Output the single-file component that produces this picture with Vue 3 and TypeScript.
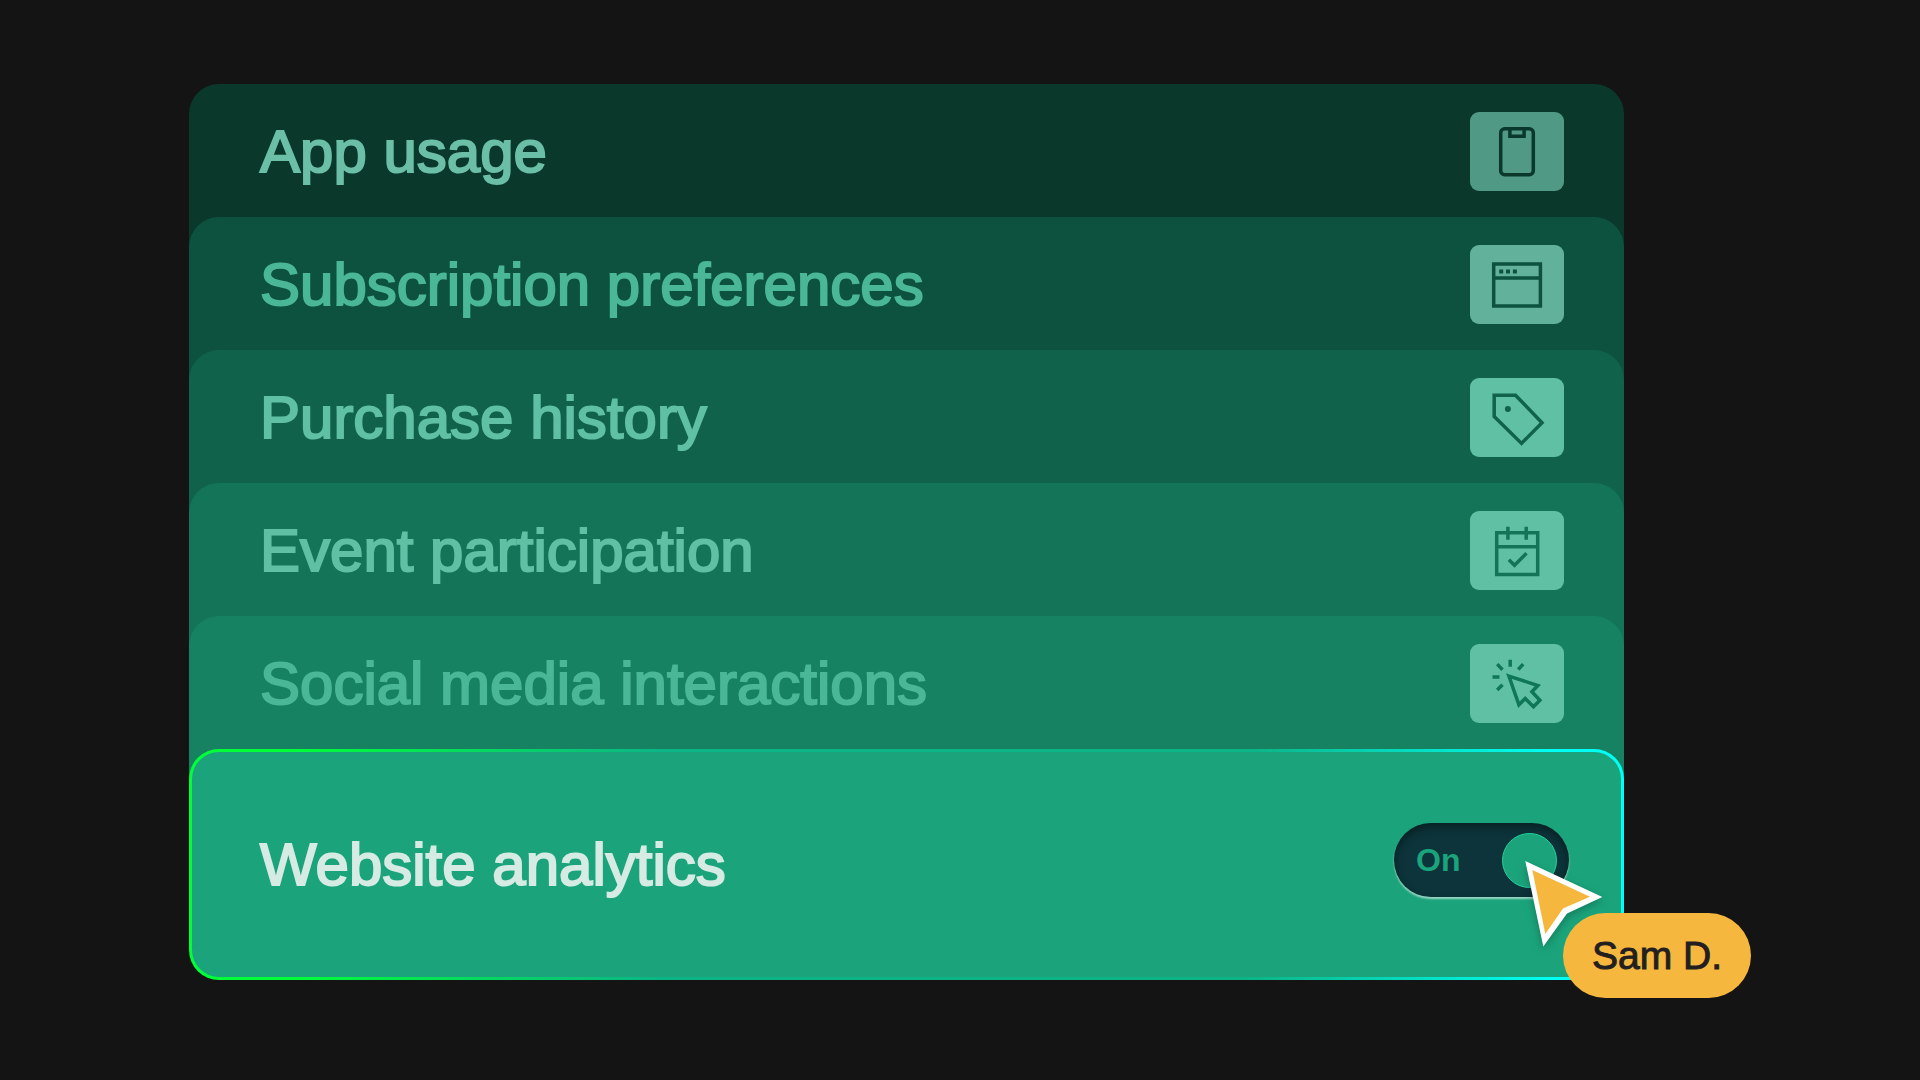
<script setup lang="ts">
import { ref } from 'vue'

type IconName = 'phone' | 'window' | 'tag' | 'calendar' | 'click'

interface Source {
  label: string
  icon: IconName
}

const sources: Source[] = [
  { label: 'App usage', icon: 'phone' },
  { label: 'Subscription preferences', icon: 'window' },
  { label: 'Purchase history', icon: 'tag' },
  { label: 'Event participation', icon: 'calendar' },
  { label: 'Social media interactions', icon: 'click' },
]

const enabled = ref(true)
</script>

<template>
  <main class="page">
    <section class="stack">
      <div v-for="source in sources" :key="source.icon" class="row" :class="source.icon">
        <h2 class="label">{{ source.label }}</h2>
        <span class="tile">
          <svg class="icon" viewBox="0 0 60 60" stroke-width="3.5" aria-hidden="true">
            <template v-if="source.icon === 'phone'">
              <rect x="13.7" y="6.7" width="32.6" height="46" rx="4" />
              <path d="M22.9 6.7v7.6h14.2v-7.6" />
            </template>
            <template v-else-if="source.icon === 'window'">
              <path d="M6.7 9.1h46.7v42H6.7zM6.7 23h46.7" />
              <path class="solid" d="M12.2 14.4h4v4h-4zM19 14.4h4v4h-4zM25.9 14.4h4v4h-4z" />
            </template>
            <template v-else-if="source.icon === 'tag'">
              <path d="M7.2 7.2h21.3L55 34.7 34.5 55.4 7.2 28.4z" />
              <circle class="solid" cx="20.9" cy="21" r="3" />
            </template>
            <template v-else-if="source.icon === 'calendar'">
              <path d="M9.7 11.7h41v41.8h-41zM9.7 25.8h41M20.9 5.7v13M39.2 5.7v13" />
              <path d="M21.9 38.7l5.6 5.6 12-12" />
            </template>
            <template v-else>
              <path d="M21.9 22.1l29 9.4-6 6.3 8 8.5-6.4 6.5-8.3-8.3-6.3 6.3z" />
              <path d="M23.2 5.8v7M5.5 23.1h7M36.2 10.1l-5 5.4M10.2 10.1l5.3 5.7M15.5 30.8l-5.3 5.3" />
            </template>
          </svg>
        </span>
      </div>

      <div class="row active">
        <h2 id="analytics-label" class="label">Website analytics</h2>
        <label class="switch">
          <input v-model="enabled" type="checkbox" role="switch" aria-labelledby="analytics-label" />
          <span class="state">On</span>
          <span class="knob"></span>
        </label>
        <div class="collaborator">
          <svg class="pointer" viewBox="0 0 78 86" aria-hidden="true">
            <path fill="#fff" d="M0.3 0L77.3 36 42 52.5 18.3 85.5z" />
            <path fill="#f6b73f" d="M7.3 9L65 35.8 38 47.5 20.3 73z" />
          </svg>
          <span class="name">Sam D.</span>
        </div>
      </div>
    </section>
  </main>
</template>

<style>
body {
  margin: 0;
  background: #141414;
}
</style>

<style scoped>
.page {
  box-sizing: border-box;
  min-height: 100vh;
  padding: 84px 296px 100px 189px;
  background: #141414;
  font-family: 'Liberation Sans', Arial, sans-serif;
}

.stack {
  display: flex;
  flex-direction: column;
}

.row {
  display: flex;
  align-items: flex-start;
  justify-content: space-between;
  margin-bottom: -32px;
  padding: 28px 60px 58px 71px;
  border-radius: 30px 30px 0 0;
}

.label {
  margin: 0;
  font-size: 60px;
  font-weight: 400;
  line-height: 79px;
  -webkit-text-stroke: 2px currentColor;
}

.tile {
  display: flex;
  align-items: center;
  justify-content: center;
  width: 94px;
  height: 79px;
  border-radius: 9px;
}

.icon {
  width: 60px;
  height: 60px;
  fill: none;
  stroke: currentColor;
}

.icon .solid {
  fill: currentColor;
  stroke: none;
}

.phone {
  background: #0a382b;
  color: #6bbfa6;
}
.phone .tile {
  background: #509a85;
  color: #0a382b;
}

.window {
  background: #0d523f;
  color: #4ab796;
}
.window .tile {
  background: #62b19a;
  color: #0d523f;
}

.tag {
  background: #10624b;
  color: #5fc0a4;
}
.tag .tile {
  background: #5fc0a4;
  color: #10624b;
}

.calendar {
  background: #137458;
  color: #5fc0a4;
}
.calendar .tile {
  background: #5fc0a4;
  color: #137458;
}

.click {
  background: #168262;
  color: #4ab796;
}
.click .tile {
  background: #5fc0a4;
  color: #0f7757;
}

.active {
  position: relative;
  margin-bottom: 0;
  padding: 71px 52px 73px 68px;
  border: 3px solid transparent;
  border-radius: 30px;
  background:
    linear-gradient(#1ba47b, #1ba47b) padding-box,
    linear-gradient(90deg, #00ff38 7%, #0bb586 33%, #0bb586 74%, #00fff4 95%) border-box;
  color: #d5ebe3;
}

.active .label {
  padding-top: 2px;
}

.switch {
  position: relative;
  box-sizing: border-box;
  display: flex;
  align-items: center;
  justify-content: space-between;
  width: 175px;
  height: 74px;
  padding: 0 12px 0 22px;
  border-radius: 37px;
  background: #0c343a;
  box-shadow:
    inset 0 4px 10px rgba(0, 0, 0, 0.4),
    0 2px 2px rgba(255, 255, 255, 0.55);
}

.switch input {
  position: absolute;
  inset: 0;
  width: 100%;
  height: 100%;
  margin: 0;
  border-radius: 37px;
  appearance: none;
  cursor: pointer;
}

.state {
  color: #1ba47b;
  font-size: 32px;
  font-weight: 700;
  line-height: 40px;
}

.knob {
  box-sizing: border-box;
  width: 55px;
  height: 55px;
  border: 1px solid #21d39d;
  border-radius: 50%;
  background: #1ba47b;
}

.collaborator {
  position: absolute;
  right: -130px;
  bottom: -21px;
  display: flex;
  flex-direction: column;
  pointer-events: none;
}

.pointer {
  width: 78px;
  height: 86px;
  margin: 0 0 -34px -38px;
  filter: drop-shadow(0 3px 4px rgba(0, 0, 0, 0.25));
}

.name {
  box-sizing: border-box;
  position: relative;
  padding: 0 29px;
  border-radius: 43px;
  background: #f6b73f;
  color: #231f20;
  font-size: 39px;
  line-height: 85px;
  white-space: nowrap;
  -webkit-text-stroke: 1px currentColor;
}
</style>
